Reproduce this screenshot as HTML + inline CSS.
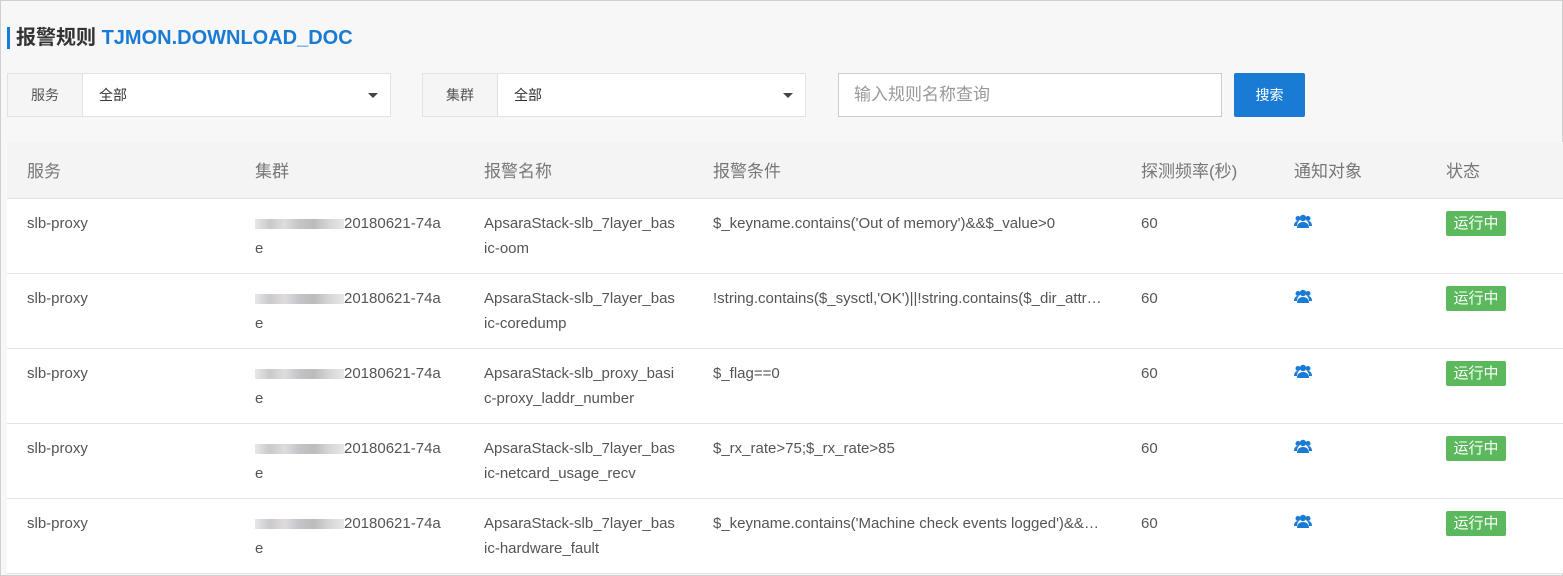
<!DOCTYPE html><html><head><meta charset="utf-8"><style>
*{margin:0;padding:0;box-sizing:border-box}
body{width:1563px;height:576px;background:#f7f7f7;font-family:"Liberation Sans","Noto Sans CJK SC",sans-serif;position:relative;overflow:hidden;border:1px solid #cfcfcf}
.abs{position:absolute}
.title{left:6px;top:26px;height:22px;border-left:3px solid #1a7bd5;padding-left:6px;font-size:20px;font-weight:bold;color:#333;line-height:22px;white-space:nowrap}
.title span{color:#1a7bd5}
.grp{top:72px;height:44px;border:1px solid #e3e3e3;background:#fff;display:flex}
.grp .lab{width:75px;background:#f5f5f5;border-right:1px solid #e3e3e3;font-size:14px;color:#555;text-align:center;line-height:42px}
.grp .val{flex:1;font-size:14px;color:#333;line-height:42px;padding-left:16px;position:relative}
.grp .val:after{content:"";position:absolute;right:12px;top:19px;border:5px solid transparent;border-top:5px solid #444}
.inp{left:837px;top:72px;width:384px;height:44px;border:1px solid #ccc;background:#fff;font-size:17px;color:#999;line-height:42px;padding-left:15px}
.btn{left:1233px;top:72px;width:71px;height:44px;background:#1a7bd5;color:#fff;font-size:14px;text-align:center;line-height:44px;border-radius:2px}
table{position:absolute;left:6px;top:141px;width:1556px;border-collapse:collapse;background:#fff;font-size:15px;color:#555;table-layout:fixed}
th{height:56px;background:#f4f4f4;font-weight:normal;color:#777;font-size:17px;text-align:left;border-bottom:1px solid #e3e3e3;padding:0;padding-bottom:1px}
td{height:75px;vertical-align:top;padding-top:12px;line-height:25px;border-bottom:1px solid #e3e3e3;overflow:hidden}
.c0{padding-left:20px}
.blur{display:inline-block;width:89px;height:10px;vertical-align:middle;background:linear-gradient(90deg,#e8e8e8,#c9c9cc,#e0dcdc,#c2c4c8,#bcbcbc,#d6d6d6,#e8e8e8)}
.tag{display:inline-block;background:#5cb85c;color:#fff;font-size:15px;line-height:25px;width:60px;text-align:center;border-radius:2px;margin-top:0}
.ell{white-space:nowrap;overflow:hidden;text-overflow:ellipsis;width:390px;display:block}
svg{margin-top:3px}
</style></head><body>
<div class="abs title">报警规则 <span>TJMON.DOWNLOAD_DOC</span></div>
<div class="abs grp" style="left:6px;width:384px"><div class="lab">服务</div><div class="val">全部</div></div>
<div class="abs grp" style="left:421px;width:384px"><div class="lab">集群</div><div class="val">全部</div></div>
<div class="abs inp">输入规则名称查询</div>
<div class="abs btn">搜索</div>
<table>
<colgroup><col style="width:248px"><col style="width:229px"><col style="width:229px"><col style="width:428px"><col style="width:153px"><col style="width:152px"><col></colgroup>
<tr><th class="c0">服务</th><th>集群</th><th>报警名称</th><th>报警条件</th><th>探测频率(秒)</th><th>通知对象</th><th>状态</th></tr>
<tr><td class="c0">slb-proxy</td><td><span class="blur"></span>20180621-74a<br>e</td><td>ApsaraStack-slb_7layer_bas<br>ic-oom</td><td><span class="ell">$_keyname.contains('Out of memory')&amp;&amp;$_value&gt;0</span></td><td>60</td><td><svg width="18" height="14" viewBox="0 0 18 14"><g fill="#1a7bd5"><circle cx="9" cy="4" r="3.2"/><path d="M3 14c0-4 2.5-6 6-6s6 2 6 6z"/><circle cx="4" cy="4.5" r="2.5"/><circle cx="14" cy="4.5" r="2.5"/><path d="M0 12c0-3 1.5-5 4-5h1c-1.5 1.5-2 3-2 5zM18 12c0-3-1.5-5-4-5h-1c1.5 1.5 2 3 2 5z"/></g></svg></td><td><span class="tag">运行中</span></td></tr>
<tr><td class="c0">slb-proxy</td><td><span class="blur"></span>20180621-74a<br>e</td><td>ApsaraStack-slb_7layer_bas<br>ic-coredump</td><td><span class="ell">!string.contains($_sysctl,'OK')||!string.contains($_dir_attr)&amp;&amp;</span></td><td>60</td><td><svg width="18" height="14" viewBox="0 0 18 14"><g fill="#1a7bd5"><circle cx="9" cy="4" r="3.2"/><path d="M3 14c0-4 2.5-6 6-6s6 2 6 6z"/><circle cx="4" cy="4.5" r="2.5"/><circle cx="14" cy="4.5" r="2.5"/><path d="M0 12c0-3 1.5-5 4-5h1c-1.5 1.5-2 3-2 5zM18 12c0-3-1.5-5-4-5h-1c1.5 1.5 2 3 2 5z"/></g></svg></td><td><span class="tag">运行中</span></td></tr>
<tr><td class="c0">slb-proxy</td><td><span class="blur"></span>20180621-74a<br>e</td><td>ApsaraStack-slb_proxy_basi<br>c-proxy_laddr_number</td><td>$_flag==0</td><td>60</td><td><svg width="18" height="14" viewBox="0 0 18 14"><g fill="#1a7bd5"><circle cx="9" cy="4" r="3.2"/><path d="M3 14c0-4 2.5-6 6-6s6 2 6 6z"/><circle cx="4" cy="4.5" r="2.5"/><circle cx="14" cy="4.5" r="2.5"/><path d="M0 12c0-3 1.5-5 4-5h1c-1.5 1.5-2 3-2 5zM18 12c0-3-1.5-5-4-5h-1c1.5 1.5 2 3 2 5z"/></g></svg></td><td><span class="tag">运行中</span></td></tr>
<tr><td class="c0">slb-proxy</td><td><span class="blur"></span>20180621-74a<br>e</td><td>ApsaraStack-slb_7layer_bas<br>ic-netcard_usage_recv</td><td>$_rx_rate&gt;75;$_rx_rate&gt;85</td><td>60</td><td><svg width="18" height="14" viewBox="0 0 18 14"><g fill="#1a7bd5"><circle cx="9" cy="4" r="3.2"/><path d="M3 14c0-4 2.5-6 6-6s6 2 6 6z"/><circle cx="4" cy="4.5" r="2.5"/><circle cx="14" cy="4.5" r="2.5"/><path d="M0 12c0-3 1.5-5 4-5h1c-1.5 1.5-2 3-2 5zM18 12c0-3-1.5-5-4-5h-1c1.5 1.5 2 3 2 5z"/></g></svg></td><td><span class="tag">运行中</span></td></tr>
<tr><td class="c0">slb-proxy</td><td><span class="blur"></span>20180621-74a<br>e</td><td>ApsaraStack-slb_7layer_bas<br>ic-hardware_fault</td><td><span class="ell">$_keyname.contains('Machine check events logged')&amp;&amp;$_value</span></td><td>60</td><td><svg width="18" height="14" viewBox="0 0 18 14"><g fill="#1a7bd5"><circle cx="9" cy="4" r="3.2"/><path d="M3 14c0-4 2.5-6 6-6s6 2 6 6z"/><circle cx="4" cy="4.5" r="2.5"/><circle cx="14" cy="4.5" r="2.5"/><path d="M0 12c0-3 1.5-5 4-5h1c-1.5 1.5-2 3-2 5zM18 12c0-3-1.5-5-4-5h-1c1.5 1.5 2 3 2 5z"/></g></svg></td><td><span class="tag">运行中</span></td></tr>
</table>
</body></html>
